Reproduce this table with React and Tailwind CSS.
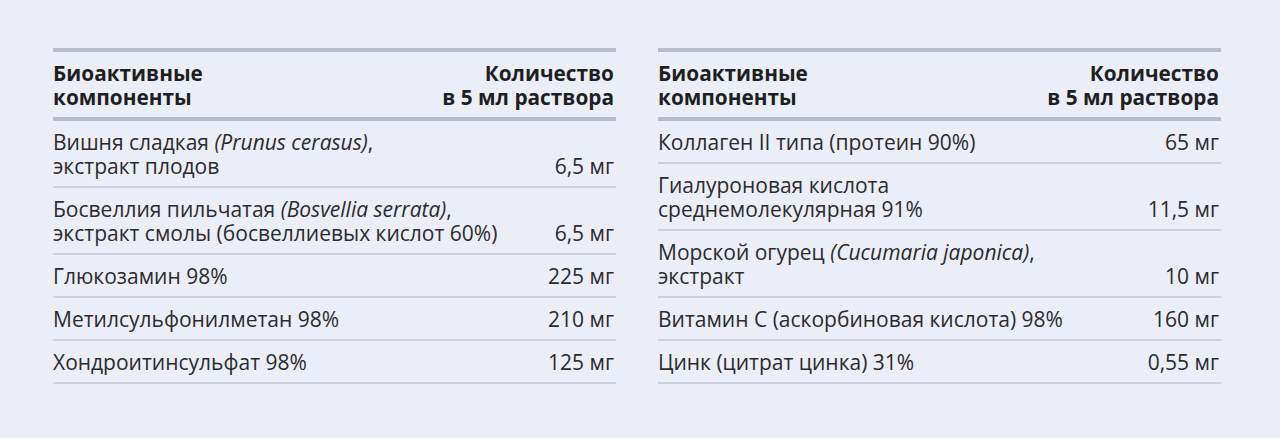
import React from "react";

const left = [
  { name: <>Вишня сладкая <i>(Prunus cerasus)</i>,<br />экстракт плодов</>, val: "6,5 мг" },
  { name: <>Босвеллия пильчатая <i>(Bosvellia serrata)</i>,<br />экстракт смолы (босвеллиевых кислот 60%)</>, val: "6,5 мг" },
  { name: <>Глюкозамин 98%</>, val: "225 мг" },
  { name: <>Метилсульфонилметан 98%</>, val: "210 мг" },
  { name: <>Хондроитинсульфат 98%</>, val: "125 мг" },
];

const right = [
  { name: <>Коллаген II типа (протеин 90%)</>, val: "65 мг" },
  { name: <>Гиалуроновая кислота<br />среднемолекулярная 91%</>, val: "11,5 мг" },
  { name: <>Морской огурец <i>(Cucumaria japonica)</i>,<br />экстракт</>, val: "10 мг" },
  { name: <>Витамин С (аскорбиновая кислота) 98%</>, val: "160 мг" },
  { name: <>Цинк (цитрат цинка) 31%</>, val: "0,55 мг" },
];

function Table({ rows }) {
  return (
    <div className="w-[563px]">
      <div className="h-[4px] bg-[#b9bdcb]" />
      <div className="flex justify-between items-end pt-[9px] pb-[8px] font-bold text-[20.8px] leading-[24px] text-[#1e1f22]">
        <div>Биоактивные<br />компоненты</div>
        <div className="text-right pr-[2px]">Количество<br />в 5 мл раствора</div>
      </div>
      <div className="h-[4px] bg-[#b9bdcb]" />
      {rows.map((r, i) => (
        <div key={i} className={`flex justify-between items-end ${r.name.props.children.length > 2 ? "pt-[9px] pb-[8px]" : "pt-[9px] pb-[9px]"} border-b-2 border-[#cfd2dc] text-[21px] leading-[24px] text-[#2a2b2e]`}>
          <div>{r.name}</div>
          <div className="text-right whitespace-nowrap pr-[2px]">{r.val}</div>
        </div>
      ))}
    </div>
  );
}

export default function App() {
  return (
    <div className="w-[1280px] h-[438px] bg-[#eceef7] pt-[48px] pl-[53px] flex gap-[42px]" style={{ fontFamily: '"Open Sans", "Noto Sans", sans-serif' }}>
      <Table rows={left} />
      <Table rows={right} />
    </div>
  );
}
